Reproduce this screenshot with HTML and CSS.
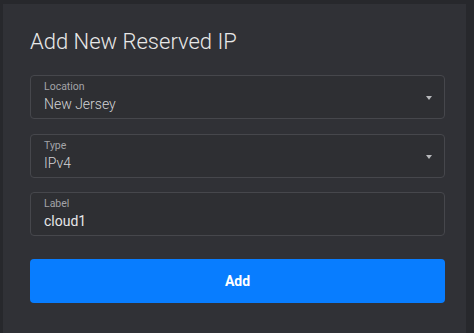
FILE: index.html
```html
<!DOCTYPE html>
<html>
<head>
<meta charset="utf-8">
<link rel="stylesheet" href="styles.css">
</head>
<body>
<div class="card">
  <h1 class="title">Add New Reserved IP</h1>
  <div class="fields">
    <div class="field select">
      <div class="label">Location</div>
      <div class="value">New Jersey</div>
      <span class="caret"></span>
    </div>
    <div class="field select">
      <div class="label">Type</div>
      <div class="value">IPv4</div>
      <span class="caret"></span>
    </div>
    <div class="field">
      <div class="label">Label</div>
      <div class="value input">cloud1</div>
    </div>
  </div>
  <button class="btn">Add</button>
</div>
</body>
</html>
```
FILE: styles.css
```css
html, body {
  margin: 0;
  padding: 0;
  background: #27282c;
  height: 100%;
  overflow: hidden;
}
body {
  font-family: Roboto, "Liberation Sans", sans-serif;
}
.card {
  margin: 4px 8px 0 3px;
  padding: 25px 21px 40px 27px;
  background: #303136;
  min-height: 400px;
  box-sizing: border-box;
}
.title {
  margin: 0;
  font-size: 22px;
  line-height: 26px;
  font-weight: 300;
  color: #e8e8e8;
}
.fields {
  margin-top: 20px;
  display: flex;
  flex-direction: column;
  gap: 14.5px;
}
.field {
  position: relative;
  height: 44px;
  box-sizing: border-box;
  border: 1px solid #46474c;
  border-radius: 4px;
  background: #2e2f33;
  padding: 4px 13px 5px;
}
.label {
  font-size: 10.5px;
  line-height: 13px;
  color: #a3a4a8;
}
.value {
  margin-top: 2px;
  font-size: 14px;
  line-height: 18px;
  font-weight: 300;
  color: #d2d3d6;
}
.value.input {
  font-weight: 400;
  color: #e6e6e8;
}
.caret {
  position: absolute;
  right: 12px;
  top: 20px;
  width: 0;
  height: 0;
  border-left: 3.5px solid transparent;
  border-right: 3.5px solid transparent;
  border-top: 4px solid #b8b9bc;
}
.btn {
  display: block;
  width: 100%;
  margin-top: 23px;
  height: 44px;
  border: none;
  border-radius: 4px;
  background: #087dff;
  color: #ffffff;
  font-family: Roboto, "Liberation Sans", sans-serif;
  font-weight: 700;
  font-size: 14px;
}
```
